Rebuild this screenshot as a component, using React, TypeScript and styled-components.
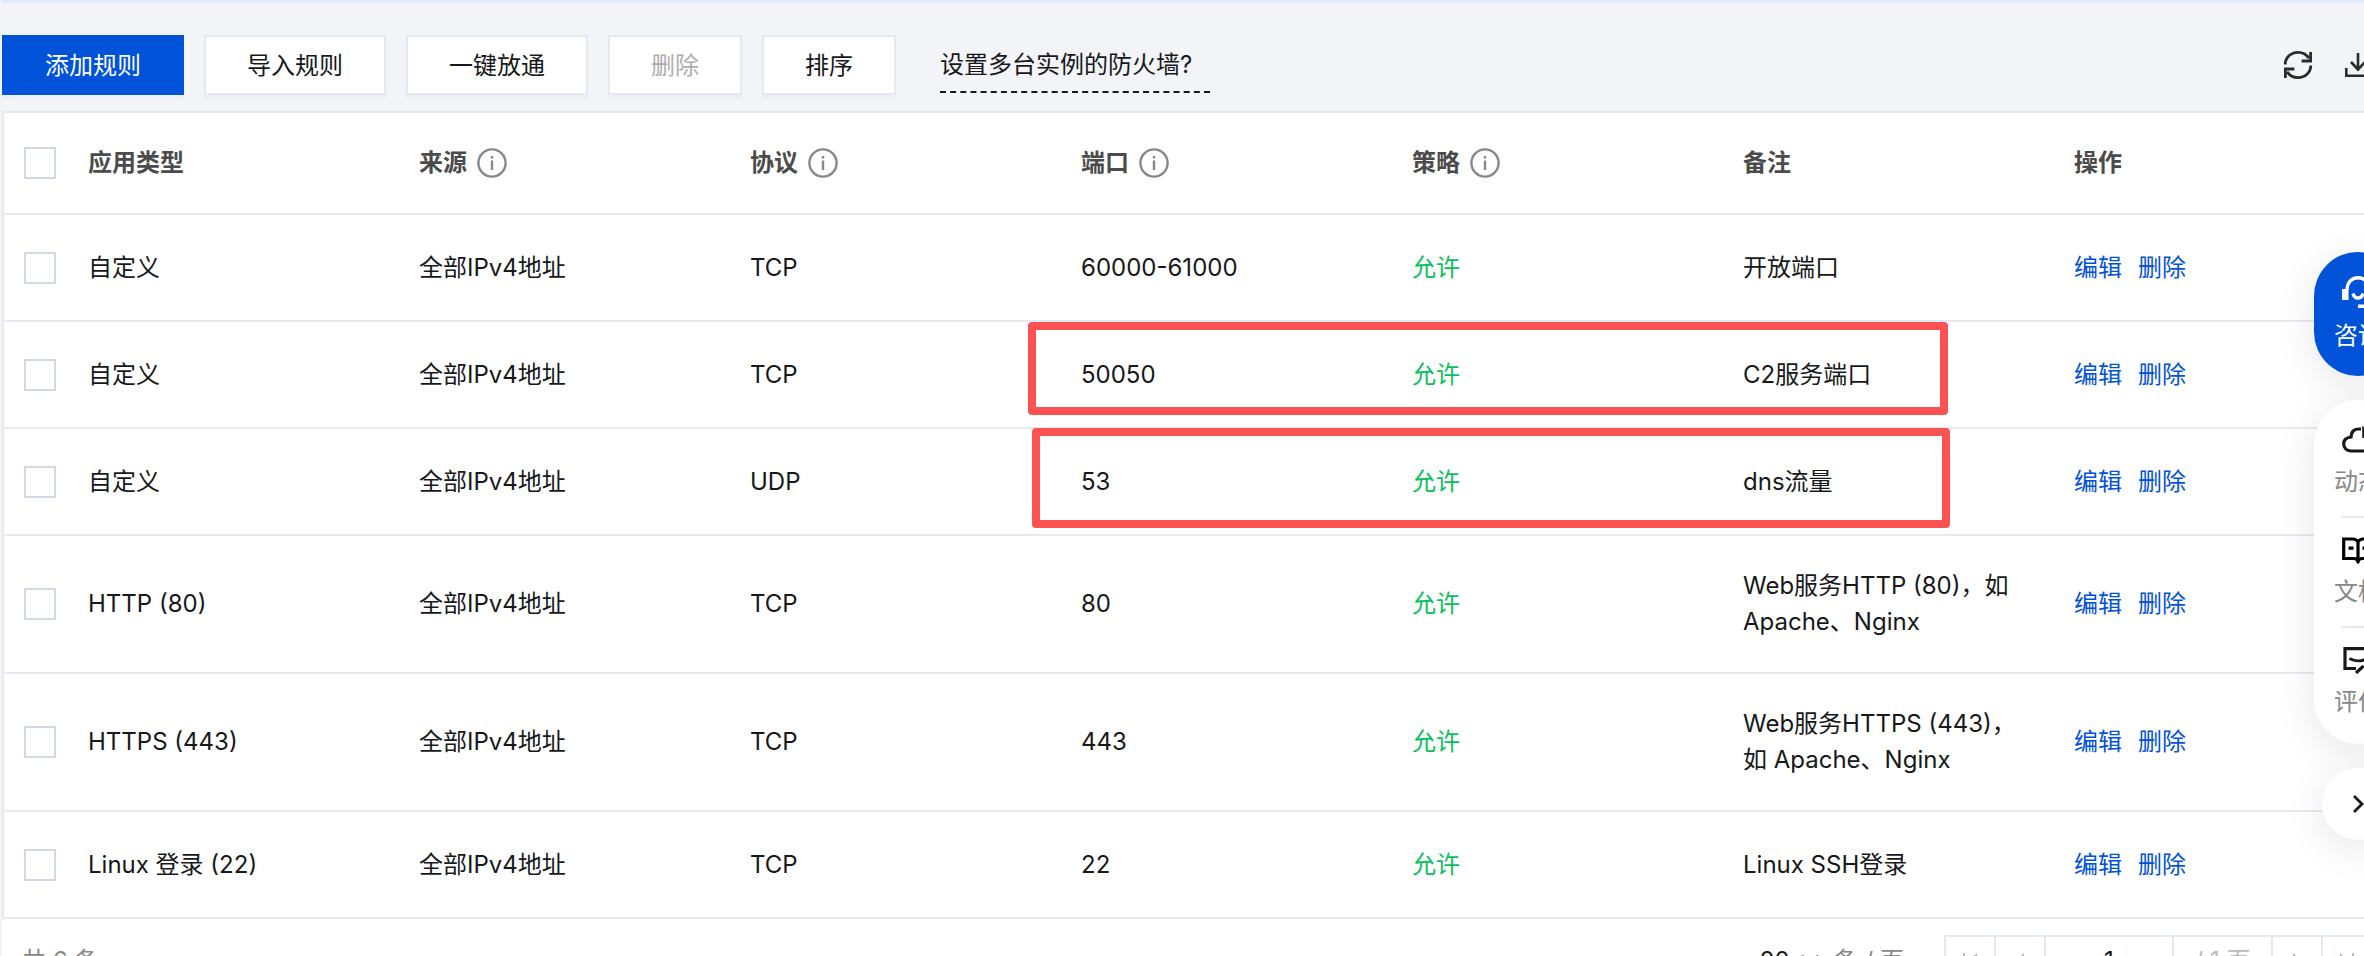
import React from "react";
import styled, { createGlobalStyle, css } from "styled-components";

const GlobalStyle = createGlobalStyle`
  *, *::before, *::after { box-sizing: border-box; }
  html, body { margin: 0; padding: 0; background: #f2f4f8; }
  body, button, input, select {
    font-family: Inter, "Noto Sans CJK SC", sans-serif;
    font-size: 24px;
    line-height: 36px;
    color: #16181a;
  }
`;

const Page = styled.div`
  position: relative;
  height: 100vh;
  overflow: hidden;
  padding-left: 2px;
  display: flex;
  flex-direction: column;
`;

const TopStrip = styled.div`
  flex: none;
  height: 3px;
  background: #e0eaff;
`;

const Toolbar = styled.div`
  flex: none;
  display: flex;
  align-items: center;
  gap: 20px;
  height: 108px;
`;

const Button = styled.button<{ $primary?: boolean }>`
  flex: none;
  height: 60px;
  padding: 2px 41px 0;
  border: 2px solid #e4e8f0;
  border-radius: 0;
  background: #fff;
  box-shadow: 0 4px 0 rgba(54, 58, 80, 0.03);
  white-space: nowrap;
  cursor: pointer;
  &:disabled { color: #adadad; cursor: default; }
  ${(p) => p.$primary && css`
    background: #0052d9;
    border-color: #0052d9;
    color: #fff;
  `}
`;

const HelpLink = styled.a`
  margin-left: 24px;
  padding: 10px 18px 8px 0;
  border-bottom: 2px dashed #16181a;
  color: inherit;
  text-decoration: none;
  white-space: nowrap;
`;

const ToolbarBody = styled.div`
  flex: 1;
  display: flex;
  align-items: center;
  gap: 20px;
  padding-top: 16px;
`;

const ToolIcons = styled.div`
  margin-left: auto;
  margin-right: -10px;
  display: flex;
  gap: 28px;
`;

const IconButton = styled.button`
  width: 32px;
  height: 32px;
  padding: 0;
  border: 0;
  background: none;
  cursor: pointer;
  svg { display: block; }
`;

const Card = styled.section`
  flex: none;
  margin-right: -21px;
  background: #fff;
`;

const Table = styled.table`
  width: 100%;
  table-layout: fixed;
  border-collapse: separate;
  border-spacing: 0;
  border: 2px solid #e4e8f0;
  border-right: 0;
  border-bottom: 0;
`;

const CheckCol = styled.col`
  width: 64px;
`;

const HeadCell = styled.th`
  height: 102px;
  padding: 0 20px;
  border-bottom: 2px solid #e4e8f0;
  text-align: left;
  font-weight: 600;
  color: #4b4b4b;
`;

const HeadLabel = styled.span`
  display: flex;
  align-items: center;
  gap: 10px;
`;

const Cell = styled.td<{ $tone?: "allow" }>`
  height: 107px;
  padding: 32px 20px;
  border-bottom: 2px solid #e8eaf1;
  color: ${(p) => (p.$tone === "allow" ? "#0abf5b" : "inherit")};
`;

const Checkbox = styled.input.attrs({ type: "checkbox" })`
  appearance: none;
  display: block;
  width: 32px;
  height: 32px;
  margin: 0;
  border: 2px solid #d3d9e3;
  background: #fff;
  &:checked { background: #0052d9; border-color: #0052d9; }
`;

const Actions = styled.div`
  display: flex;
  gap: 16px;
`;

const ActionLink = styled.a`
  color: #0052d9;
  text-decoration: none;
`;

const Footer = styled.footer`
  display: flex;
  align-items: center;
  padding: 16px 12px 16px 20px;
  color: #888;
`;

const PageSize = styled.label`
  margin-left: auto;
  margin-right: 40px;
  display: flex;
  align-items: center;
  gap: 10px;
`;

const SizeSelect = styled.select`
  appearance: none;
  padding: 0;
  border: 0;
  background: none;
`;

const Chevron = styled.svg`
  margin-right: 4px;
`;

const Pager = styled.nav`
  display: flex;
  height: 52px;
  > * + * { margin-left: -2px; }
`;

const PagerButton = styled.button`
  display: flex;
  align-items: center;
  justify-content: center;
  width: 52px;
  padding: 0;
  border: 2px solid #e4e8f0;
  background: #fff;
`;

const PagerInput = styled.input`
  width: 130px;
  padding: 0;
  border: 2px solid #e4e8f0;
  border-radius: 0;
  text-align: center;
`;

const PagerTotal = styled.span`
  display: flex;
  align-items: center;
  justify-content: center;
  width: 101px;
  border: 2px solid #e4e8f0;
  color: #bbb;
`;

const Mark = styled.div<{ $x: number; $y: number; $w: number; $h: number }>`
  position: absolute;
  left: ${(p) => p.$x}px;
  top: ${(p) => p.$y}px;
  width: ${(p) => p.$w}px;
  height: ${(p) => p.$h}px;
  border: 8px solid #fc5352;
  border-radius: 4px;
  pointer-events: none;
`;

const Dock = styled.aside`
  position: absolute;
  top: 252px;
  right: -38px;
  display: flex;
  flex-direction: column;
  align-items: center;
  gap: 24px;
`;

const dockPill = css`
  width: 88px;
  border-radius: 44px;
  box-shadow: 0 8px 40px rgba(0, 0, 0, 0.1);
`;

const DockButton = styled.button`
  display: flex;
  flex-direction: column;
  align-items: center;
  gap: 10px;
  width: 100%;
  padding: 0;
  border: 0;
  background: none;
  color: #888;
  svg { display: block; }
`;

const Consult = styled.div`
  ${dockPill}
  height: 124px;
  padding-top: 24px;
  background: #0052d9;
  ${DockButton} { color: #fff; }
`;

const DockPanel = styled.div`
  ${dockPill}
  padding: 26px 0 24px;
  background: #fff;
`;

const DockDivider = styled.hr`
  width: 32px;
  height: 2px;
  margin: 16px auto 18px;
  border: 0;
  background: #e4e8f0;
`;

const DockToggle = styled.button`
  display: flex;
  align-items: center;
  justify-content: center;
  width: 72px;
  height: 72px;
  padding: 0;
  border: 0;
  border-radius: 36px;
  background: #fff;
  box-shadow: 0 8px 40px rgba(0, 0, 0, 0.1);
`;

const InfoIcon = () => (
  <svg width="30" height="30" viewBox="0 0 30 30" fill="none" stroke="#888" strokeWidth="2.4" aria-hidden="true">
    <circle cx="15" cy="15" r="13.6" />
    <path d="M15 12.500v9.500M15 8v2.600" />
  </svg>
);

const RefreshIcon = () => (
  <svg width="32" height="32" viewBox="0 0 32 32" fill="none" stroke="#2b2b2b" strokeWidth="2.800" aria-hidden="true">
    <path d="M3.200 15.500C3.200 8.500 9 3.400 16 3.400c4.600 0 8.600 2.300 10.900 5.800M28.800 16.500c0 7-5.800 12.100-12.800 12.100-4.600 0-8.600-2.300-10.900-5.800" />
    <path d="M28.600 3v9h-9M3.400 29v-9h9" />
  </svg>
);

const DownloadIcon = () => (
  <svg width="32" height="32" viewBox="0 0 32 32" fill="none" stroke="#2b2b2b" strokeWidth="2.600" aria-hidden="true">
    <path d="M16 4v16.500M9 13l7 7.500 7-7.500M4.300 19v7.700h23.400V19" />
  </svg>
);

const HeadsetIcon = () => (
  <svg width="32" height="32" viewBox="0 0 32 32" fill="none" stroke="#fff" strokeWidth="3.400" aria-hidden="true">
    <path d="M5 14C5 6.500 9.500 1.700 16 1.700S27 6.500 27 14v9.500c0 4-2 6.800-5 6.800h-6" />
    <path d="M0 13h6.500v11H0zM25.500 13H32v11h-6.500z" fill="#fff" stroke="none" />
    <path d="M11 17.500c.8 3 2.500 4.500 5 4.500s4.200-1.500 5-4.500" />
  </svg>
);

const CloudIcon = () => (
  <svg width="32" height="28" viewBox="0 0 32 28" fill="none" stroke="#16181a" strokeWidth="3.200" aria-hidden="true">
    <path d="M19 3.200C12.500 2.200 9.500 5 9 11c-4.500.5-7.300 3-7.300 6.800 0 4.500 3.200 7.200 7.700 7.200h14c4 0 7-3 7-6.700" />
    <path d="M21.500 12V3l7 9V3" strokeWidth="2.500" />
  </svg>
);

const BookIcon = () => (
  <svg width="32" height="28" viewBox="0 0 32 28" fill="none" stroke="#000" strokeWidth="3.200" aria-hidden="true">
    <path d="M16 6c-1.500-2.500-3-3-5-3H1.700v19.500H12c2 0 3 .5 4 2.500 1-2 2-2.500 4-2.500h10.300V3H21c-2 0-3.500.5-5 3zM16 6v21" />
    <path d="M6.500 12.200h5M20.500 12.200h5" />
  </svg>
);

const CommentIcon = () => (
  <svg width="32" height="28" viewBox="0 0 32 28" fill="none" stroke="#16181a" strokeWidth="3.200" aria-hidden="true">
    <path d="M14 22.500H3V2.700h27V14" />
    <path d="M7.500 12.500c5 3 12 3 17.500 0M14 27l7.500-7" />
  </svg>
);

const PagerIcon = ({ flip, bar }: { flip?: boolean; bar?: boolean }) => (
  <svg width="16" height="16" viewBox="0 0 16 16" aria-hidden="true">
    <g fill="#bbb" transform={flip ? "rotate(180 8 8)" : undefined}>
      <path d={bar ? "M15 0v16L6 8z" : "M12 0v16L3 8z"} />
      {bar && <path d="M1 0h2v16H1z" />}
    </g>
  </svg>
);

type Column = { title: string; info?: boolean };
const columns: Column[] = [
  { title: "应用类型" },
  { title: "来源", info: true },
  { title: "协议", info: true },
  { title: "端口", info: true },
  { title: "策略", info: true },
  { title: "备注" },
  { title: "操作" },
];

type Rule = { app: string; protocol: string; port: string; note: string };
const rules: Rule[] = [
  { app: "自定义", protocol: "TCP", port: "60000-61000", note: "开放端口" },
  { app: "自定义", protocol: "TCP", port: "50050", note: "C2服务端口" },
  { app: "自定义", protocol: "UDP", port: "53", note: "dns流量" },
  { app: "HTTP (80)", protocol: "TCP", port: "80", note: "Web服务HTTP (80)，如 Apache、Nginx" },
  { app: "HTTPS (443)", protocol: "TCP", port: "443", note: "Web服务HTTPS (443)，如 Apache、Nginx" },
  { app: "Linux 登录 (22)", protocol: "TCP", port: "22", note: "Linux SSH登录" },
];

export default function App() {
  return (
    <Page>
      <GlobalStyle />
      <TopStrip />
      <Toolbar>
        <ToolbarBody>
          <Button $primary>添加规则</Button>
          <Button>导入规则</Button>
          <Button>一键放通</Button>
          <Button disabled>删除</Button>
          <Button>排序</Button>
          <HelpLink href="#firewall">设置多台实例的防火墙?</HelpLink>
          <ToolIcons>
            <IconButton aria-label="刷新"><RefreshIcon /></IconButton>
            <IconButton aria-label="下载"><DownloadIcon /></IconButton>
          </ToolIcons>
        </ToolbarBody>
      </Toolbar>
      <Card>
        <Table>
          <colgroup>
            <CheckCol />
            {columns.map((c) => <col key={c.title} />)}
          </colgroup>
          <thead>
            <tr>
              <HeadCell><Checkbox aria-label="全选" /></HeadCell>
              {columns.map((c) => (
                <HeadCell key={c.title} scope="col">
                  <HeadLabel>{c.title}{c.info && <InfoIcon />}</HeadLabel>
                </HeadCell>
              ))}
            </tr>
          </thead>
          <tbody>
            {rules.map((r) => (
              <tr key={r.port}>
                <Cell><Checkbox aria-label={`选择 ${r.port}`} /></Cell>
                <Cell>{r.app}</Cell>
                <Cell>全部IPv4地址</Cell>
                <Cell>{r.protocol}</Cell>
                <Cell>{r.port}</Cell>
                <Cell $tone="allow">允许</Cell>
                <Cell>{r.note}</Cell>
                <Cell>
                  <Actions>
                    <ActionLink href="#edit">编辑</ActionLink>
                    <ActionLink href="#delete">删除</ActionLink>
                  </Actions>
                </Cell>
              </tr>
            ))}
          </tbody>
        </Table>
        <Footer>
          <span>共 6 条</span>
          <PageSize>
            <SizeSelect defaultValue="20" aria-label="每页条数">
              <option>20</option>
              <option>50</option>
            </SizeSelect>
            <Chevron width="20" height="12" viewBox="0 0 20 12" fill="none" stroke="#16181a" strokeWidth="2.500" aria-hidden="true">
              <path d="M2 1l8 8 8-8" />
            </Chevron>
            条 / 页
          </PageSize>
          <Pager aria-label="分页">
            <PagerButton disabled aria-label="首页"><PagerIcon bar /></PagerButton>
            <PagerButton disabled aria-label="上一页"><PagerIcon /></PagerButton>
            <PagerInput defaultValue="1" aria-label="页码" />
            <PagerTotal>/ 1 页</PagerTotal>
            <PagerButton disabled aria-label="下一页"><PagerIcon flip /></PagerButton>
            <PagerButton disabled aria-label="末页"><PagerIcon flip bar /></PagerButton>
          </Pager>
        </Footer>
      </Card>
      <Mark $x={1028} $y={322} $w={920} $h={93} />
      <Mark $x={1032} $y={428} $w={918} $h={100} />
      <Dock>
        <Consult>
          <DockButton><HeadsetIcon />咨询</DockButton>
        </Consult>
        <DockPanel>
          <DockButton><CloudIcon />动态</DockButton>
          <DockDivider />
          <DockButton><BookIcon />文档</DockButton>
          <DockDivider />
          <DockButton><CommentIcon />评价</DockButton>
        </DockPanel>
        <DockToggle aria-label="收起">
          <svg width="12" height="18" viewBox="0 0 12 18" fill="none" stroke="#16181a" strokeWidth="2.800" aria-hidden="true">
            <path d="M2 1l8 8-8 8" />
          </svg>
        </DockToggle>
      </Dock>
    </Page>
  );
}
